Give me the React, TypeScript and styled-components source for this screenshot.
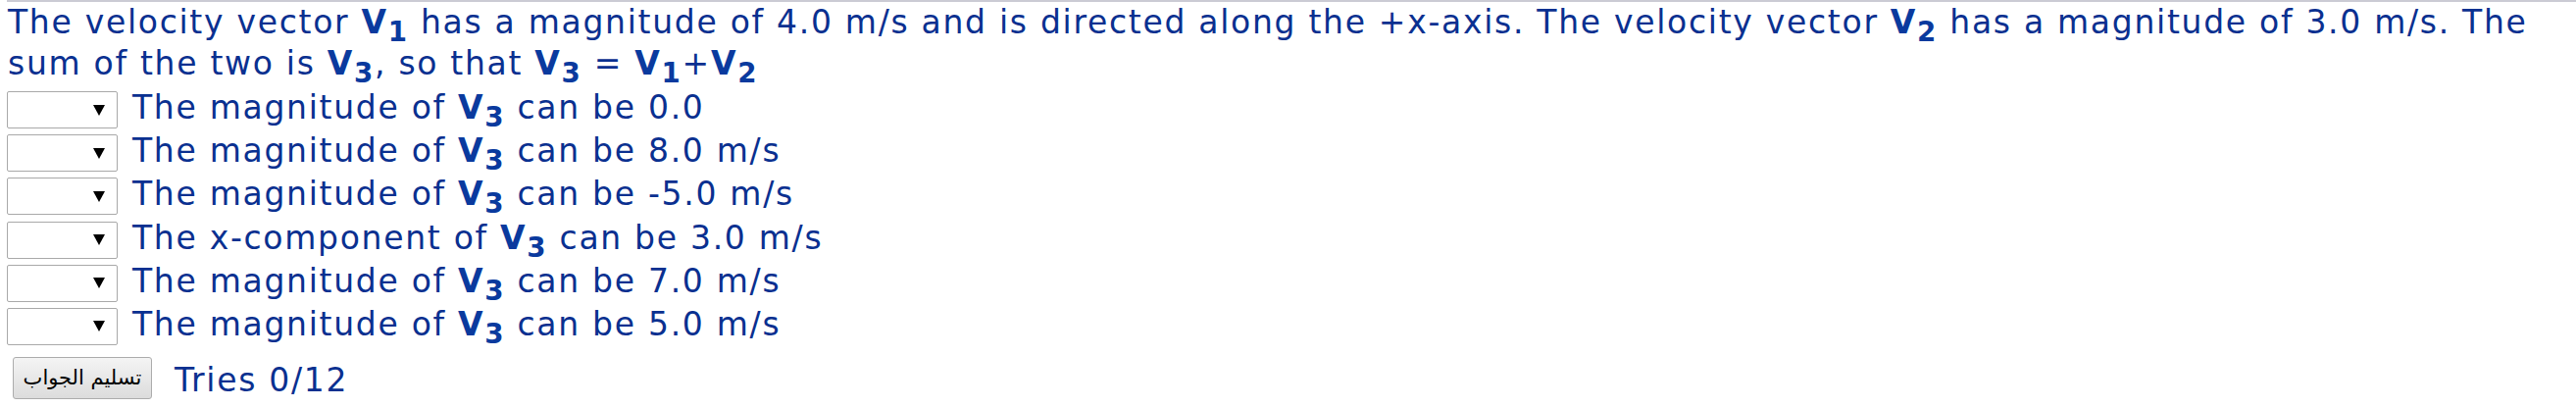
import React from "react";
import styled, { createGlobalStyle } from "styled-components";

const GlobalStyle = createGlobalStyle`
  body {
    margin: 0;
    background: #ffffff;
    font-family: "DejaVu Sans", Verdana, sans-serif;
    color: #0a3090;
  }
`;

const statements = [
  { before: "The magnitude of", after: "can be 0.0" },
  { before: "The magnitude of", after: "can be 8.0 m/s" },
  { before: "The magnitude of", after: "can be -5.0 m/s" },
  { before: "The x-component of", after: "can be 3.0 m/s" },
  { before: "The magnitude of", after: "can be 7.0 m/s" },
  { before: "The magnitude of", after: "can be 5.0 m/s" },
];

const Vec = ({ n }: { n: number }) => (
  <VecName>
    V<sub>{n}</sub>
  </VecName>
);

const App = () => {
  return (
    <>
      <GlobalStyle />
      <Problem>
        <Prompt>
          The velocity vector <Vec n={1} /> has a magnitude of 4.0 m/s and is
          directed along the +x-axis. The velocity vector <Vec n={2} /> has a
          magnitude of 3.0 m/s. The
          <br />
          sum of the two is <Vec n={3} />, so that <Vec n={3} /> ={" "}
          <Vec n={1} />+<Vec n={2} />
        </Prompt>
        {statements.map((s, i) => (
          <Row key={i}>
            <Picker>
              <Arrow />
            </Picker>
            <Label>
              {s.before} <Vec n={3} /> {s.after}
            </Label>
          </Row>
        ))}
        <SubmitRow>
          <SubmitButton type="button">تسليم الجواب</SubmitButton>
          <Tries>Tries 0/12</Tries>
        </SubmitRow>
      </Problem>
    </>
  );
};

export default App;

const Problem = styled.div`
  margin-left: 7px;
  border-top: 2px solid #cbcbd4;
  font-size: 33px;
  letter-spacing: 1.7px;
`;

const Prompt = styled.p`
  margin: 0 0 4px 1px;
  line-height: 42px;
  white-space: nowrap;
`;

const VecName = styled.b`
  font-weight: bold;
  color: #0a3a9e;

  sub {
    font-size: 0.84em;
    line-height: 0;
  }
`;

const Row = styled.div`
  display: flex;
  align-items: flex-start;
  gap: 15px;
  height: 44.2px;
`;

const Picker = styled.div`
  box-sizing: border-box;
  width: 113px;
  height: 38px;
  margin-top: 3px;
  border: 1px solid #a9a9a9;
  border-radius: 2px;
  background: #ffffff;
  display: flex;
  align-items: center;
  justify-content: flex-end;
  padding-right: 12px;
`;

const Arrow = styled.span`
  width: 0;
  height: 0;
  border-left: 6px solid transparent;
  border-right: 6px solid transparent;
  border-top: 11px solid #000000;
`;

const Label = styled.span`
  line-height: 40px;
  white-space: nowrap;
`;

const SubmitRow = styled.div`
  display: flex;
  align-items: center;
  gap: 23px;
  margin-top: 7px;
  padding-left: 6px;
`;

const SubmitButton = styled.button`
  box-sizing: border-box;
  width: 142px;
  height: 43px;
  padding: 0;
  border: 1px solid #acacac;
  border-radius: 3px;
  background: linear-gradient(#f4f4f4, #dcdcdc);
  color: #000000;
  font-family: "DejaVu Sans", sans-serif;
  font-size: 21px;
  letter-spacing: 0;
  direction: rtl;
`;

const Tries = styled.span`
  line-height: 40px;
  margin-top: 6px;
`;
